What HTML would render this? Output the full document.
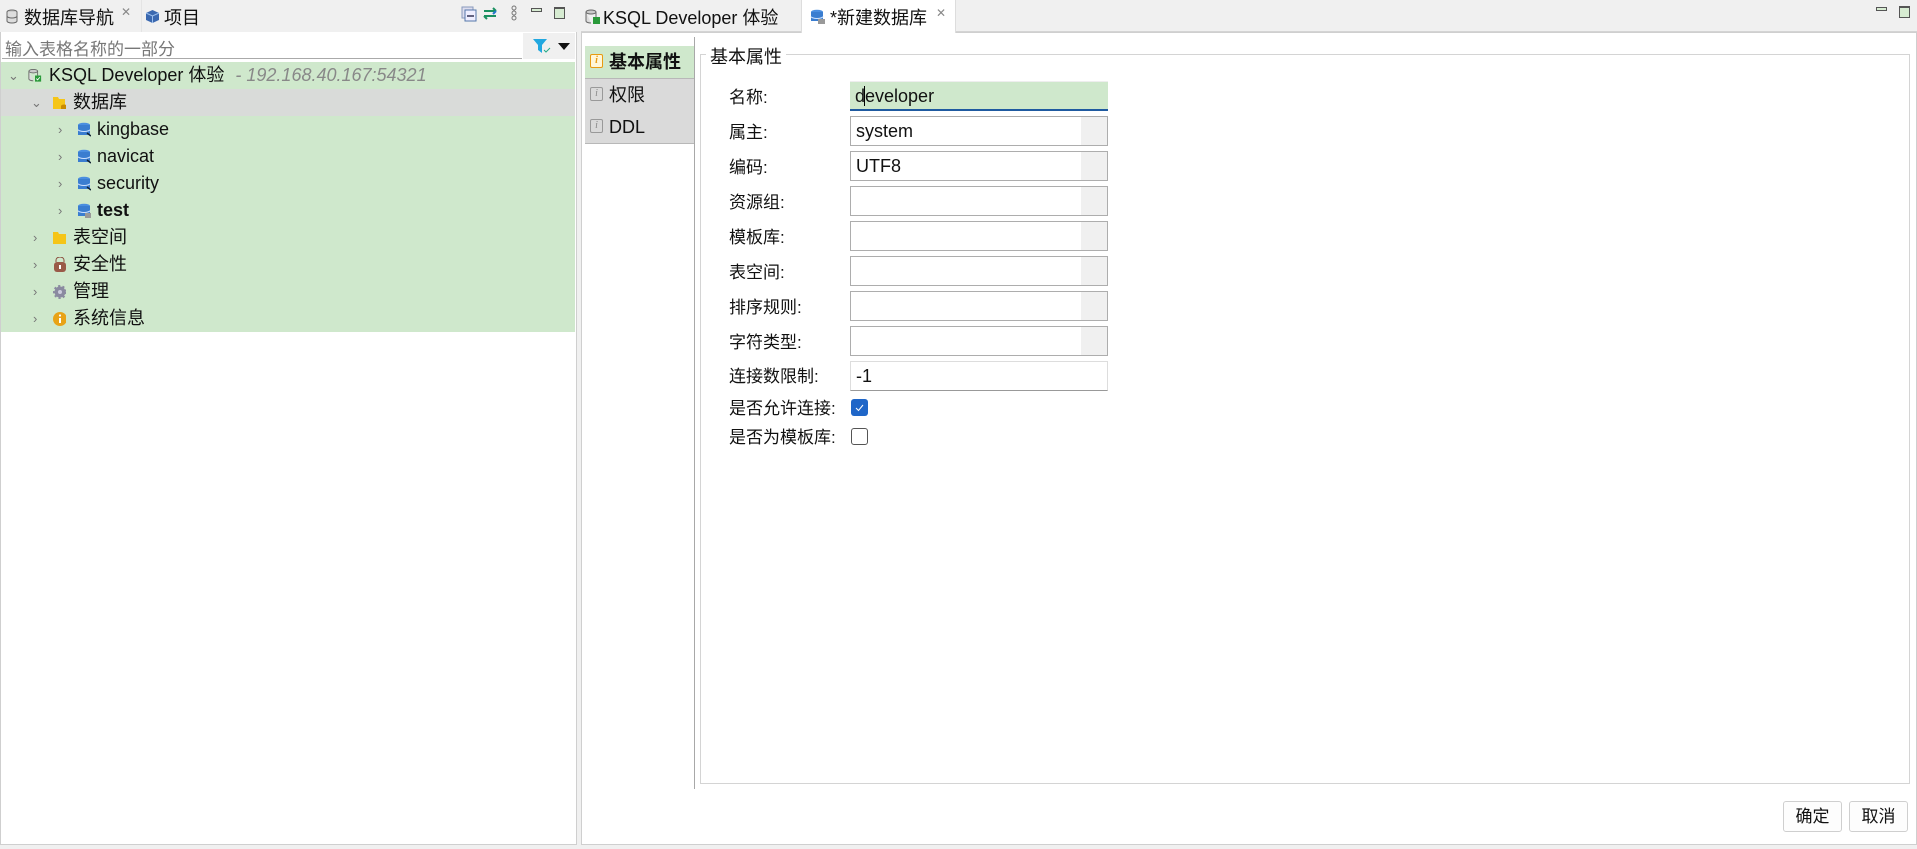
<!DOCTYPE html>
<html><head><meta charset="utf-8">
<style>
*{box-sizing:border-box;margin:0;padding:0}
body{width:1917px;height:849px;background:#f0f0f0;font-family:"Liberation Sans","Noto Sans CJK SC",sans-serif;font-size:18px;color:#111;position:relative;overflow:hidden}
.abs{position:absolute}
.row{position:absolute;left:0;width:574px;height:27px;line-height:27px;white-space:nowrap}
.chev{position:absolute;top:0;color:#777;font-size:13px}
.ico{position:absolute;top:6px;width:14px;height:15px}
.lbl{position:absolute;left:729px;font-size:17px;line-height:20px;margin-top:3px}
.inp{position:absolute;left:850px;width:258px;height:30px;border:1px solid #adadad;background:#fff;font-size:18px;line-height:28px;padding-left:5px}
.inp .dd{position:absolute;right:0;top:0;width:26px;height:28px;background:#f0f0f0}
.btn{position:absolute;top:801px;width:59px;height:31px;border:1px solid #cfcfcf;border-radius:3px;background:#fdfdfd;font-size:17px;text-align:center;line-height:29px}
.vt{position:absolute;left:585px;width:110px;height:33px;border-bottom:1px solid #b8b8b8;line-height:33px;font-size:18px;padding-left:24px}
.vt i{position:absolute;left:5px;top:8px;width:13px;height:14px;border:1px solid #999;border-radius:2px;font-size:10px;line-height:12px;text-align:center;color:#888;font-style:italic;font-family:"Liberation Serif",serif}
</style></head><body>

<div class="abs" style="left:0;top:0;width:577px;height:32px;background:#f0f0f0"></div>
<div class="abs" style="left:0;top:0;width:142px;height:32px;background:#f0f0f0;border-right:1px solid #e4e4e4"></div>
<svg class="abs" style="left:5px;top:9px" width="16" height="16" viewBox="0 0 16 16"><ellipse cx="7" cy="3" rx="5" ry="2" fill="#ccc" stroke="#666"/><path d="M2 3v9c0 1 2 2 5 2s5-1 5-2V3" fill="#ddd" stroke="#666"/><path d="M2 7c0 1 2 2 5 2s5-1 5-2" fill="none" stroke="#666"/></svg>
<div class="abs" style="left:24px;top:4px;font-size:18px">数据库导航</div>
<div class="abs" style="left:121px;top:5px;font-size:12px;color:#888">✕</div>
<svg class="abs" style="left:145px;top:9px" width="15" height="15" viewBox="0 0 15 15"><path d="M7.5 1L14 4v7l-6.5 3L1 11V4z" fill="#3a68b0"/><path d="M1 4l6.5 3L14 4M7.5 7v7" stroke="#9cc0ee" fill="none"/></svg>
<div class="abs" style="left:164px;top:4px;font-size:18px">项目</div>
<svg class="abs" style="left:461px;top:6px" width="16" height="16"><rect x="1" y="1" width="11" height="11" fill="#dde" stroke="#8899bb"/><rect x="4" y="4" width="11" height="11" fill="#eef" stroke="#5577aa"/><path d="M6 10h7" stroke="#335" stroke-width="1.5"/></svg>
<svg class="abs" style="left:482px;top:6px" width="16" height="14"><path d="M2 5h12M11 2l3 3M2 10h12M5 13l-3-3" stroke="#1a9060" stroke-width="2" fill="none"/><path d="M14 5l-3 3" stroke="#2277cc" stroke-width="2"/></svg>
<svg class="abs" style="left:511px;top:5px" width="6" height="16"><circle cx="3" cy="3" r="2" fill="none" stroke="#777"/><circle cx="3" cy="8" r="2" fill="none" stroke="#777"/><circle cx="3" cy="13" r="2" fill="none" stroke="#777"/></svg>
<div class="abs" style="left:531px;top:8px;width:11px;height:4px;border:1px solid #555;background:#d7ecd2"></div>
<div class="abs" style="left:554px;top:7px;width:11px;height:12px;border:1px solid #555;border-top-width:2px;background:#d7ecd2"></div>

<div class="abs" style="left:0;top:32px;width:577px;height:813px;background:#fff;border:1px solid #cfcfcf;border-top:none"></div>
<div class="abs" style="left:2px;top:34px;width:520px;height:25px;border-bottom:1px solid #aaa"></div>
<div class="abs" style="left:5px;top:35px;font-size:17px;color:#777">输入表格名称的一部分</div>
<div class="abs" style="left:523px;top:33px;width:52px;height:26px;background:#f0f0f0"></div>
<svg class="abs" style="left:532px;top:38px" width="20" height="17"><path d="M1 1h14l-5 6v8l-4-3V7z" fill="#22a8e0"/><path d="M12 12l2 2 4-4" stroke="#2a8" fill="none"/></svg>
<svg class="abs" style="left:558px;top:43px" width="12" height="7"><path d="M0 0h12L6 7z" fill="#111"/></svg>

<div class="abs" style="left:1px;top:62px;width:574px;height:270px;background:#cfe8cc"></div>
<div class="abs" style="left:1px;top:89px;width:574px;height:27px;background:#d9dbd9"></div>

<div class="row" style="top:62px">
 <span class="chev" style="left:8px">&#8964;</span>
 <svg class="ico" style="left:28px" width="16" height="16" viewBox="0 0 16 16"><ellipse cx="6" cy="3" rx="5" ry="2" fill="#ccc" stroke="#666"/><path d="M1 3v9c0 1 2 2 5 2" fill="#ddd" stroke="#666"/><path d="M11 3v5" stroke="#666"/><rect x="8" y="8" width="7" height="7" fill="#2a9a3a"/><path d="M9.5 11.5l1.5 1.5 2.5-3" stroke="#fff" fill="none"/></svg>
 <span style="position:absolute;left:49px">KSQL Developer 体验 <i style="color:#888;margin-left:6px">- 192.168.40.167:54321</i></span>
</div>
<div class="row" style="top:89px">
 <span class="chev" style="left:31px">&#8964;</span>
 <svg class="ico" style="left:52px" width="16" height="16"><path d="M1 2h5l1 2h6v10H1z" fill="#f5c518"/><ellipse cx="12" cy="11" rx="3" ry="1.5" fill="#c98a00"/><rect x="9" y="11" width="6" height="3" fill="#c98a00"/></svg>
 <span style="position:absolute;left:73px">数据库</span>
</div>
<div class="row" style="top:116px"><span class="chev" style="left:58px">›</span><svg class="ico" style="left:77px" width="16" height="16"><ellipse cx="7" cy="3" rx="6" ry="2.3" fill="#4a8ee0"/><rect x="1" y="3" width="12" height="10" fill="#3a7dd0"/><path d="M1 7.5c0 1 3 2 6 2s6-1 6-2" stroke="#cfe3ff" fill="none"/><path d="M10 11l4 3" stroke="#123" stroke-width="1.5"/></svg><span style="position:absolute;left:97px">kingbase</span></div>
<div class="row" style="top:143px"><span class="chev" style="left:58px">›</span><svg class="ico" style="left:77px" width="16" height="16"><ellipse cx="7" cy="3" rx="6" ry="2.3" fill="#4a8ee0"/><rect x="1" y="3" width="12" height="10" fill="#3a7dd0"/><path d="M1 7.5c0 1 3 2 6 2s6-1 6-2" stroke="#cfe3ff" fill="none"/><path d="M10 11l4 3" stroke="#123" stroke-width="1.5"/></svg><span style="position:absolute;left:97px">navicat</span></div>
<div class="row" style="top:170px"><span class="chev" style="left:58px">›</span><svg class="ico" style="left:77px" width="16" height="16"><ellipse cx="7" cy="3" rx="6" ry="2.3" fill="#4a8ee0"/><rect x="1" y="3" width="12" height="10" fill="#3a7dd0"/><path d="M1 7.5c0 1 3 2 6 2s6-1 6-2" stroke="#cfe3ff" fill="none"/><path d="M10 11l4 3" stroke="#123" stroke-width="1.5"/></svg><span style="position:absolute;left:97px">security</span></div>
<div class="row" style="top:197px"><span class="chev" style="left:58px">›</span><svg class="ico" style="left:77px" width="16" height="16"><ellipse cx="7" cy="3" rx="6" ry="2.3" fill="#4a8ee0"/><rect x="1" y="3" width="12" height="10" fill="#3a7dd0"/><path d="M1 7.5c0 1 3 2 6 2s6-1 6-2" stroke="#cfe3ff" fill="none"/><rect x="8" y="10" width="7" height="5" fill="#999"/></svg><b style="position:absolute;left:97px">test</b></div>
<div class="row" style="top:224px"><span class="chev" style="left:33px">›</span><svg class="ico" style="left:52px" width="16" height="16"><path d="M1 2h5l1 2h7v10H1z" fill="#f5c518"/></svg><span style="position:absolute;left:73px">表空间</span></div>
<div class="row" style="top:251px"><span class="chev" style="left:33px">›</span><svg class="ico" style="left:52px" width="16" height="16"><path d="M4 5V3a4 3 0 0 1 8 0v2" stroke="#8a4a3a" fill="none"/><rect x="2" y="5" width="12" height="10" rx="3" fill="#9a5a48"/><rect x="7" y="8" width="2" height="4" fill="#fff"/></svg><span style="position:absolute;left:73px">安全性</span></div>
<div class="row" style="top:278px"><span class="chev" style="left:33px">›</span><svg class="ico" style="left:52px" width="16" height="16"><circle cx="8" cy="8" r="5.5" fill="#8a8aa0" stroke="#8a8aa0" stroke-width="3" stroke-dasharray="2 2"/><circle cx="8" cy="8" r="2" fill="#ccd"/></svg><span style="position:absolute;left:73px">管理</span></div>
<div class="row" style="top:305px"><span class="chev" style="left:33px">›</span><svg class="ico" style="left:52px" width="16" height="16"><circle cx="8" cy="8" r="7" fill="#e8a317"/><rect x="7" y="7" width="2" height="5" fill="#fff"/><circle cx="8" cy="4.5" r="1.1" fill="#fff"/></svg><span style="position:absolute;left:73px">系统信息</span></div>

<div class="abs" style="left:581px;top:32px;width:1336px;height:813px;background:#fff;border:1px solid #cfcfcf"></div>
<div class="abs" style="left:581px;top:31px;width:1336px;height:1px;background:#d4d4d4"></div>
<svg class="abs" style="left:585px;top:9px" width="16" height="16" viewBox="0 0 16 16"><ellipse cx="6" cy="3" rx="5" ry="2" fill="#ccc" stroke="#666"/><path d="M1 3v9c0 1 2 2 5 2" fill="#ddd" stroke="#666"/><path d="M11 3v5" stroke="#666"/><rect x="8" y="8" width="7" height="7" fill="#2a9a3a"/></svg>
<div class="abs" style="left:603px;top:4px;font-size:18px">KSQL Developer 体验</div>
<div class="abs" style="left:801px;top:0;width:155px;height:33px;background:#fff;border-left:1px solid #ddd;border-right:1px solid #ddd"></div>
<svg class="abs" style="left:810px;top:9px" width="15" height="15"><ellipse cx="7" cy="3" rx="6" ry="2.3" fill="#4a8ee0"/><rect x="1" y="3" width="12" height="9" fill="#3a7dd0"/><path d="M1 7.5c0 1 3 2 6 2s6-1 6-2" stroke="#cfe3ff" fill="none"/><rect x="8" y="10" width="7" height="5" fill="#999"/></svg>
<div class="abs" style="left:830px;top:4px;font-size:18px">*新建数据库</div>
<div class="abs" style="left:936px;top:6px;font-size:12px;color:#888">✕</div>
<div class="abs" style="left:1876px;top:7px;width:11px;height:4px;border:1px solid #555;background:#d7ecd2"></div>
<div class="abs" style="left:1899px;top:6px;width:11px;height:12px;border:1px solid #555;border-top-width:2px;background:#d7ecd2"></div>

<div class="vt" style="top:46px;background:#cfe8cc;font-weight:bold"><i style="border-color:#e89a10;color:#e89a10;background:#fff6d8">i</i>基本属性</div>
<div class="vt" style="top:79px;background:#dadada"><i>i</i>权限</div>
<div class="vt" style="top:111px;background:#dadada"><i>i</i>DDL</div>
<div class="abs" style="left:694px;top:37px;width:1px;height:752px;background:#a8a8a8"></div>

<div class="abs" style="left:700px;top:54px;width:1210px;height:730px;border:1px solid #d4d4d4"></div>
<div class="abs" style="left:706px;top:43px;background:#fff;padding:0 4px;font-size:18px">基本属性</div>

<div class="lbl" style="top:85px">名称:</div>
<div class="inp" style="top:81px;border:none;border-top:1px solid #eee;border-bottom:2px solid #1f5aa0;background:#cfe8cc;height:30px">d<span style="border-left:1px solid #000;margin-left:-1px"></span>eveloper</div>
<div class="lbl" style="top:120px">属主:</div><div class="inp" style="top:116px">system<div class="dd"></div></div>
<div class="lbl" style="top:155px">编码:</div><div class="inp" style="top:151px">UTF8<div class="dd"></div></div>
<div class="lbl" style="top:190px">资源组:</div><div class="inp" style="top:186px"><div class="dd"></div></div>
<div class="lbl" style="top:225px">模板库:</div><div class="inp" style="top:221px"><div class="dd"></div></div>
<div class="lbl" style="top:260px">表空间:</div><div class="inp" style="top:256px"><div class="dd"></div></div>
<div class="lbl" style="top:295px">排序规则:</div><div class="inp" style="top:291px"><div class="dd"></div></div>
<div class="lbl" style="top:330px">字符类型:</div><div class="inp" style="top:326px"><div class="dd"></div></div>
<div class="lbl" style="top:364px">连接数限制:</div><div class="inp" style="top:361px;border-color:#ddd;border-bottom-color:#999">-1</div>
<div class="lbl" style="top:396px">是否允许连接:</div>
<div class="abs" style="left:851px;top:399px;width:17px;height:17px;border-radius:3px;background:#1f66c8"><svg width="17" height="17"><path d="M5 9l2.5 2.5L12 6" stroke="#fff" fill="none" stroke-width="1"/></svg></div>
<div class="lbl" style="top:425px">是否为模板库:</div>
<div class="abs" style="left:851px;top:428px;width:17px;height:17px;border-radius:3px;border:1px solid #555;background:#fff"></div>

<div class="btn" style="left:1783px">确定</div>
<div class="btn" style="left:1849px">取消</div>
</body></html>
